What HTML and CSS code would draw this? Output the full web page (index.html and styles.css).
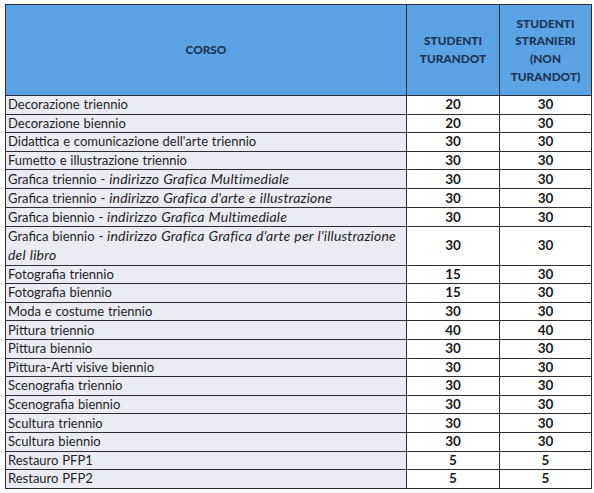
FILE: index.html
```html
<!DOCTYPE html>
<html lang="it">
<head>
<meta charset="utf-8">
<title>Corsi</title>
<link rel="stylesheet" href="styles.css">
</head>
<body>
<table class="tab">
  <colgroup><col class="c1"><col class="c2"><col class="c3"></colgroup>
  <thead>
    <tr>
      <th>CORSO</th>
      <th>STUDENTI<br>TURANDOT</th>
      <th>STUDENTI<br>STRANIERI<br>(NON<br>TURANDOT)</th>
    </tr>
  </thead>
  <tbody>
    <tr><td class="n">Decorazione triennio</td><td>20</td><td>30</td></tr>
    <tr><td class="n">Decorazione biennio</td><td>20</td><td>30</td></tr>
    <tr><td class="n">Didattica e comunicazione dell'arte triennio</td><td>30</td><td>30</td></tr>
    <tr><td class="n">Fumetto e illustrazione triennio</td><td>30</td><td>30</td></tr>
    <tr><td class="n">Grafica triennio - <i>indirizzo Grafica Multimediale</i></td><td>30</td><td>30</td></tr>
    <tr><td class="n">Grafica triennio - <i>indirizzo Grafica d'arte e illustrazione</i></td><td>30</td><td>30</td></tr>
    <tr><td class="n">Grafica biennio - <i>indirizzo Grafica Multimediale</i></td><td>30</td><td>30</td></tr>
    <tr class="dbl"><td class="n">Grafica biennio - <i>indirizzo Grafica Grafica d'arte per l'illustrazione<br>del libro</i></td><td>30</td><td>30</td></tr>
    <tr><td class="n">Fotografia triennio</td><td>15</td><td>30</td></tr>
    <tr><td class="n">Fotografia biennio</td><td>15</td><td>30</td></tr>
    <tr><td class="n">Moda e costume triennio</td><td>30</td><td>30</td></tr>
    <tr><td class="n">Pittura triennio</td><td>40</td><td>40</td></tr>
    <tr><td class="n">Pittura biennio</td><td>30</td><td>30</td></tr>
    <tr><td class="n">Pittura-Arti visive biennio</td><td>30</td><td>30</td></tr>
    <tr><td class="n">Scenografia triennio</td><td>30</td><td>30</td></tr>
    <tr><td class="n">Scenografia biennio</td><td>30</td><td>30</td></tr>
    <tr><td class="n">Scultura triennio</td><td>30</td><td>30</td></tr>
    <tr><td class="n">Scultura biennio</td><td>30</td><td>30</td></tr>
    <tr><td class="n">Restauro PFP1</td><td>5</td><td>5</td></tr>
    <tr><td class="n">Restauro PFP2</td><td>5</td><td>5</td></tr>
  </tbody>
</table>
</body>
</html>
```
FILE: styles.css
```css
html, body {
  margin: 0;
  padding: 0;
  background: #ffffff;
}
body {
  padding: 4px 0 0 5px;
  font-family: Lato, "Liberation Sans", sans-serif;
  color: #1a1a1a;
}
.tab {
  border-collapse: collapse;
  width: 586px;
  table-layout: fixed;
}
.c1 { width: 401px; }
.c2 { width: 93px; }
.c3 { width: 92px; }
.tab th {
  background: #5ba3e5;
  color: #1b3454;
  font-size: 11.8px;
  font-weight: 900;
  line-height: 17.7px;
  height: 90px;
  padding: 0;
  border: 1.5px solid #2e2e34;
  text-align: center;
  vertical-align: middle;
}
.tab td {
  border: 1.5px solid #2e2e34;
  height: 17.6px;
  padding: 0 2px;
  font-size: 13.5px;
  line-height: 17px;
  font-weight: 700;
  text-align: center;
  vertical-align: middle;
  background: #ffffff;
  color: #1a1a1a;
}
.tab td.n {
  font-weight: 400;
  text-align: left;
  background: #ebebf4;
  color: #1e1e22;
  font-size: 13px;
  word-spacing: 0.5px;
}
.tab tr.dbl td {
  height: 35.6px;
  line-height: 17.6px;
}
.tab i {
  font-style: italic;
  font-size: 14px;
  letter-spacing: 0.2px;
}
```
